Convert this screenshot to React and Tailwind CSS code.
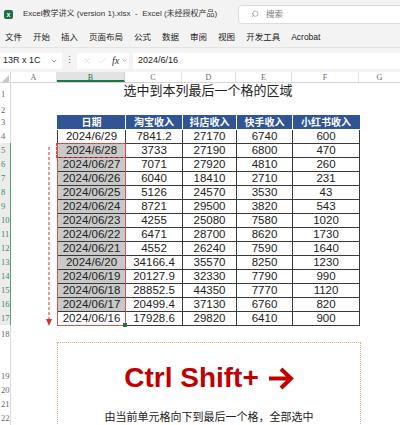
import { Search, X, Check, ChevronDown } from 'lucide-react'

const rows = [
  ['2024/6/29', '7841.2', '27170', '6740', '600'],
  ['2024/6/28', '3733', '27190', '6800', '470'],
  ['2024/06/27', '7071', '27920', '4810', '260'],
  ['2024/06/26', '6040', '18410', '2710', '231'],
  ['2024/06/25', '5126', '24570', '3530', '43'],
  ['2024/06/24', '8721', '29500', '3820', '543'],
  ['2024/06/23', '4255', '25080', '7580', '1020'],
  ['2024/06/22', '6471', '28700', '8620', '1730'],
  ['2024/06/21', '4552', '26240', '7590', '1640'],
  ['2024/6/20', '34166.4', '35570', '8250', '1230'],
  ['2024/06/19', '20127.9', '32330', '7790', '990'],
  ['2024/06/18', '28852.5', '44350', '7770', '1120'],
  ['2024/06/17', '20499.4', '37130', '6760', '820'],
  ['2024/06/16', '17928.6', '29820', '6410', '900'],
]

const colWidths = ['w-[68px]', 'w-[57px]', 'w-[54px]', 'w-[56px]', 'w-[67px]']
const headers = ['日期', '淘宝收入', '抖店收入', '快手收入', '小红书收入']
const menu = ['文件', '开始', '插入', '页面布局', '公式', '数据', '审阅', '视图', '开发工具', 'Acrobat']

function RowLabel({ n, h = 'h-[14px]', selected, bottom }) {
  return (
    <div
      className={`${h} flex ${bottom ? 'items-end' : 'items-center'} pl-[1px] text-[8.5px] leading-[14px] border-r ${
        selected ? 'text-[#3f8a5e] bg-[#ececec] border-[#5a9c74]' : 'text-[#666] border-[#dadada]'
      }`}
    >
      {n}
    </div>
  )
}

export default function App() {
  return (
    <div className="w-[400px] h-[425px] overflow-hidden bg-white font-['Liberation_Sans','Noto_Sans_CJK_SC',sans-serif] text-[#222]">
      {/* Title bar */}
      <div className="h-[28px] bg-[#f3f3f3] flex items-center">
        <div className="ml-[4px] w-[9px] h-[9px] rounded-[2px] bg-[#1d7044] flex items-center justify-center text-white text-[7px] leading-none font-bold">
          x
        </div>
        <span className="ml-[10px] text-[8px] text-[#333] whitespace-nowrap">
          Excel教学讲义 (version 1).xlsx&nbsp; -&nbsp; Excel (未经授权产品)
        </span>
        <div className="ml-auto -mr-[4px] w-[166px] h-[19px] shrink-0 bg-white border border-[#dcdcdc] rounded-[4px] flex items-center pl-[12px] gap-[7px]">
          <Search size={8} strokeWidth={1.5} className="text-[#666] -scale-x-100" />
          <span className="text-[8.5px] text-[#777]">搜索</span>
        </div>
      </div>

      {/* Ribbon tabs */}
      <div className="h-[19px] bg-[#f3f3f3] flex items-center pl-[5px] gap-[11px] text-[8.5px] text-[#222]">
        {menu.map(m => (
          <span key={m}>{m}</span>
        ))}
      </div>

      {/* Formula bar */}
      <div className="h-[25px] bg-[#f3f3f3] flex items-center pt-[1px] border-t border-[#e4e4e4]">
        <div className="w-[62px] h-[16px] bg-white flex items-center pl-[3px] text-[9px]">
          <span>13R x 1C</span>
          <ChevronDown size={8} className="ml-auto mr-[4px] text-[#666]" />
        </div>
        <span className="mx-[3px] text-[9px] text-[#666] leading-none">⋮</span>
        <div className="w-[52px] h-[16px] bg-white rounded-[2px] flex items-center pl-[5px] gap-[5px]">
          <X size={10} strokeWidth={1} className="text-[#bbb]" />
          <Check size={10} strokeWidth={1} className="text-[#bbb]" />
          <span className="font-['Liberation_Serif',serif] italic text-[10px] text-[#333]">fx</span>
          <ChevronDown size={7} className="text-[#777] -ml-[3px]" />
        </div>
        <div className="ml-[4px] flex-1 h-[16px] bg-white flex items-center pl-[5px] text-[9px]">2024/6/16</div>
      </div>

      {/* Column headers */}
      <div className="h-[11px] flex border-b border-[#d4d4d4] font-['Liberation_Serif',serif] text-[8px] text-[#666] leading-[11px]">
        <div className="w-[11px] flex items-end justify-end pr-[1px] border-r border-[#dadada]">
          <svg width="7" height="7" viewBox="0 0 7 7">
            <path d="M7 0 L7 7 L0 7 Z" fill="#c8c8c8" />
          </svg>
        </div>
        <div className="w-[46px] text-center border-r border-[#e2e2e2]">A</div>
        <div className="w-[68px] text-center bg-[#e3e3e3] text-[#217346] border-b-2 border-[#217346] border-r border-r-[#d0d0d0]">B</div>
        <div className="w-[57px] text-center border-r border-[#e2e2e2]">C</div>
        <div className="w-[54px] text-center border-r border-[#e2e2e2]">D</div>
        <div className="w-[56px] text-center border-r border-[#e2e2e2]">E</div>
        <div className="w-[67px] text-center border-r border-[#e2e2e2]">F</div>
        <div className="flex-1 text-center">G</div>
      </div>

      {/* Sheet body */}
      <div className="flex">
        <div className="w-[11px] flex flex-col font-['Liberation_Serif',serif]">
          <RowLabel n="1" h="h-[21px]" />
          <RowLabel n="2" h="h-[11px]" />
          <RowLabel n="3" />
          <RowLabel n="4" />
          {[5, 6, 7, 8, 9, 10, 11, 12, 13, 14, 15, 16, 17].map(n => (
            <RowLabel key={n} n={n} selected />
          ))}
          <RowLabel n="18" h="h-[18px]" />
          <RowLabel n="19" h="h-[40px]" bottom />
          <RowLabel n="20" />
          <RowLabel n="21" />
          <RowLabel n="22" />
        </div>

        <div className="pl-[46px] w-[349px]">
          <div className="w-[302px] h-[21px] text-center text-[13px] leading-[16px] text-[#222]">
            选中到本列最后一个格的区域
          </div>
          <div className="h-[11px]" />

          {/* Data table */}
          <div className="relative w-[303px]">
            <table className="border-collapse text-[11.5px] leading-none table-fixed">
              <thead>
                <tr className="h-[14px] bg-[#2f5597] text-white">
                  {headers.map((h, i) => (
                    <th key={h} className={`${colWidths[i]} p-0 text-[10px] font-bold border border-white border-t-[#2f5597] ${i === 0 ? 'border-l-[#2f5597]' : ''} ${i === 4 ? 'border-r-[#2f5597]' : ''}`}>
                      {h}
                    </th>
                  ))}
                </tr>
              </thead>
              <tbody>
                {rows.map((r, ri) => (
                  <tr key={ri} className="h-[14px]">
                    {r.map((c, ci) => (
                      <td
                        key={ci}
                        className={`p-0 text-center border border-[#3a3a3a] ${
                          ci === 0 && ri >= 1 && ri <= 12 ? 'bg-[#c9c9c9]' : 'bg-white'
                        }`}
                      >
                        {c}
                      </td>
                    ))}
                  </tr>
                ))}
              </tbody>
            </table>

            {/* selection outline B5:B17 */}
            <div className="absolute left-0 top-[28px] w-[69px] h-[183px] border-[1.5px] border-[#d9534f] pointer-events-none" />
            <div className="absolute left-[-1px] top-[28px] w-[70px] h-[15px] border-[1.5px] border-dashed border-[#e0403a] pointer-events-none" />
            <div className="absolute left-[66px] top-[208px] w-[4px] h-[4px] bg-[#217346]" />

            {/* down arrow */}
            <svg className="absolute left-[-11px] top-[32px]" width="6" height="180" viewBox="0 0 6 180">
              <line x1="3" y1="0" x2="3" y2="172" stroke="#c0392b" strokeWidth="1" strokeDasharray="3 2" />
              <path d="M0 172 L6 172 L3 179 Z" fill="#c0392b" />
            </svg>
          </div>

          {/* Tip box */}
          <div className="mt-[16px] w-[304px] h-[100px] border border-dotted border-[#d2b27c] flex flex-col items-center pt-[21px]">
            <div className="flex items-center text-[#c00000] font-bold text-[28px] leading-[28px]">
              <span>Ctrl Shift+</span>
              <svg className="ml-[9px]" width="26" height="23" viewBox="0 0 26 23">
                <path d="M1 11.5 H22 M13 2 L23 11.5 L13 21" fill="none" stroke="#c00000" strokeWidth="4" strokeLinejoin="miter" />
              </svg>
            </div>
            <div className="mt-[18px] text-[11px] leading-[14px] text-[#222]">由当前单元格向下到最后一个格，全部选中</div>
          </div>
        </div>
      </div>
    </div>
  )
}
